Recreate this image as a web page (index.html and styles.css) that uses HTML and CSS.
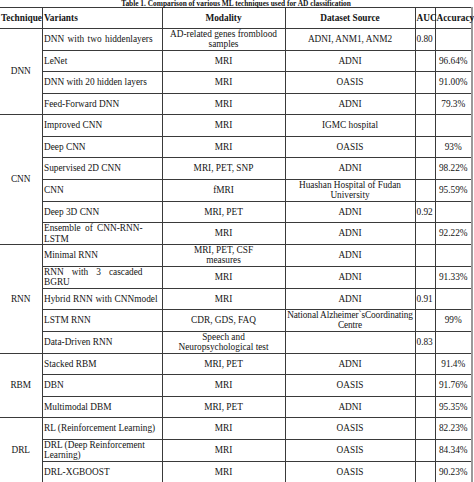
FILE: index.html
```html
<!DOCTYPE html>
<html>
<head>
<meta charset="utf-8">
<link rel="stylesheet" href="styles.css">
</head>
<body>
<div class="caption">Table 1. Comparison of various ML techniques used for AD classification</div>
<table class="grid">
<colgroup><col class="c-tech"><col class="c-var"><col class="c-mod"><col class="c-src"><col class="c-auc"><col class="c-acc"></colgroup>
<thead>
<tr class="head"><th class="tech">Technique</th><th class="var">Variants</th><th>Modality</th><th>Dataset Source</th><th class="auc">AUC</th><th class="acc">Accuracy</th></tr>
</thead>
<tbody>
<tr><td class="tech" rowspan="4">DNN</td><td class="var j j-a">DNN with two hiddenlayers</td><td>AD-related genes fromblood<br>samples</td><td>ADNI, ANM1, ANM2</td><td class="auc">0.80</td><td class="acc"></td></tr>
<tr><td class="var">LeNet</td><td>MRI</td><td>ADNI</td><td class="auc"></td><td class="acc">96.64%</td></tr>
<tr><td class="var">DNN with 20 hidden layers</td><td>MRI</td><td>OASIS</td><td class="auc"></td><td class="acc">91.00%</td></tr>
<tr class="grp-end"><td class="var">Feed-Forward DNN</td><td>MRI</td><td>ADNI</td><td class="auc"></td><td class="acc">79.3%</td></tr>

<tr><td class="tech" rowspan="6">CNN</td><td class="var">Improved CNN</td><td>MRI</td><td>IGMC hospital</td><td class="auc"></td><td class="acc"></td></tr>
<tr><td class="var">Deep CNN</td><td>MRI</td><td>OASIS</td><td class="auc"></td><td class="acc">93%</td></tr>
<tr><td class="var">Supervised 2D CNN</td><td>MRI, PET, SNP</td><td>ADNI</td><td class="auc"></td><td class="acc">98.22%</td></tr>
<tr><td class="var">CNN</td><td>fMRI</td><td>Huashan Hospital of Fudan<br>University</td><td class="auc"></td><td class="acc">95.59%</td></tr>
<tr><td class="var">Deep 3D CNN</td><td>MRI, PET</td><td>ADNI</td><td class="auc">0.92</td><td class="acc"></td></tr>
<tr><td class="var j j-c">Ensemble of CNN-RNN-<br>LSTM</td><td>MRI</td><td>ADNI</td><td class="auc"></td><td class="acc">92.22%</td></tr>

<tr><td class="tech" rowspan="5">RNN</td><td class="var">Minimal RNN</td><td>MRI, PET, CSF<br>measures</td><td>ADNI</td><td class="auc"></td><td class="acc"></td></tr>
<tr><td class="var j j-c">RNN with 3 cascaded<br>BGRU</td><td>MRI</td><td>ADNI</td><td class="auc"></td><td class="acc">91.33%</td></tr>
<tr><td class="var j j-b">Hybrid RNN with CNNmodel</td><td>MRI</td><td>ADNI</td><td class="auc">0.91</td><td class="acc"></td></tr>
<tr><td class="var">LSTM RNN</td><td>CDR, GDS, FAQ</td><td class="tight">National Alzheimer`sCoordinating<br>Centre</td><td class="auc"></td><td class="acc">99%</td></tr>
<tr><td class="var">Data-Driven RNN</td><td>Speech and<br>Neuropsychological test</td><td></td><td class="auc">0.83</td><td class="acc"></td></tr>

<tr><td class="tech" rowspan="3">RBM</td><td class="var">Stacked RBM</td><td>MRI, PET</td><td>ADNI</td><td class="auc"></td><td class="acc">91.4%</td></tr>
<tr><td class="var">DBN</td><td>MRI</td><td>OASIS</td><td class="auc"></td><td class="acc">91.76%</td></tr>
<tr><td class="var">Multimodal DBM</td><td>MRI, PET</td><td>ADNI</td><td class="auc"></td><td class="acc">95.35%</td></tr>

<tr><td class="tech last" rowspan="3">DRL</td><td class="var">RL (Reinforcement Learning)</td><td>MRI</td><td>OASIS</td><td class="auc"></td><td class="acc">82.23%</td></tr>
<tr><td class="var">DRL (Deep Reinforcement<br>Learning)</td><td>MRI</td><td>OASIS</td><td class="auc"></td><td class="acc">84.34%</td></tr>
<tr class="last-row"><td class="var">DRL-XGBOOST</td><td>MRI</td><td>OASIS</td><td class="auc"></td><td class="acc">90.23%</td></tr>
</tbody>
</table>
</body>
</html>
```

FILE: styles.css
```css
html, body {
  margin: 0;
  padding: 0;
  background: #ffffff;
}

body {
  width: 474px;
  height: 482px;
  overflow: hidden;
  font-family: "Liberation Serif", "Times New Roman", serif;
  color: #141414;
}

.caption {
  width: 472px;
  height: 7px;
  line-height: 7px;
  font-size: 7.4px;
  font-weight: bold;
  text-align: center;
  white-space: nowrap;
  overflow: visible;
}

.grid {
  border-collapse: collapse;
  table-layout: fixed;
  width: 472px;
  font-size: 9.3px;
  line-height: 10.4px;
}

.c-tech { width: 42px; }
.c-var  { width: 120px; }
.c-mod  { width: 123px; }
.c-src  { width: 130px; }
.c-auc  { width: 20px; }
.c-acc  { width: 37px; }

.grid th,
.grid td {
  border: 1px solid #3a3a3a;
  padding: 0 1px;
  text-align: center;
  vertical-align: middle;
  white-space: nowrap;
  overflow: visible;
}

.grid th {
  font-weight: bold;
}

.head {
  height: 21px;
}

.grid tbody tr {
  height: 21.5px;
}

.grid th.tech,
.grid td.tech {
  border-left: none;
  padding: 0;
}

.grid th.tech {
  text-align: left;
  padding-left: 1px;
}

.grid .var {
  text-align: left;
  padding-left: 1.5px;
}

.grid .auc {
  text-align: left;
  padding-left: 1px;
  padding-right: 0;
}

.grid .acc {
  border-right: 2px solid #9a9a9a;
  padding: 0;
}

.grid th.acc {
  text-align: left;
  padding-left: 1px;
}

.grid td.j {
  text-align: justify;
  text-align-last: justify;
  white-space: normal;
}

.grid td.j-a { padding-right: 9px; }
.grid td.j-b { padding-right: 4px; }
.grid td.j-c { padding-right: 19px; }

.grid td.tight {
  padding: 0;
  letter-spacing: -0.1px;
}

.grid tr.last-row td,
.grid td.tech.last {
  border-bottom: none;
}
```
